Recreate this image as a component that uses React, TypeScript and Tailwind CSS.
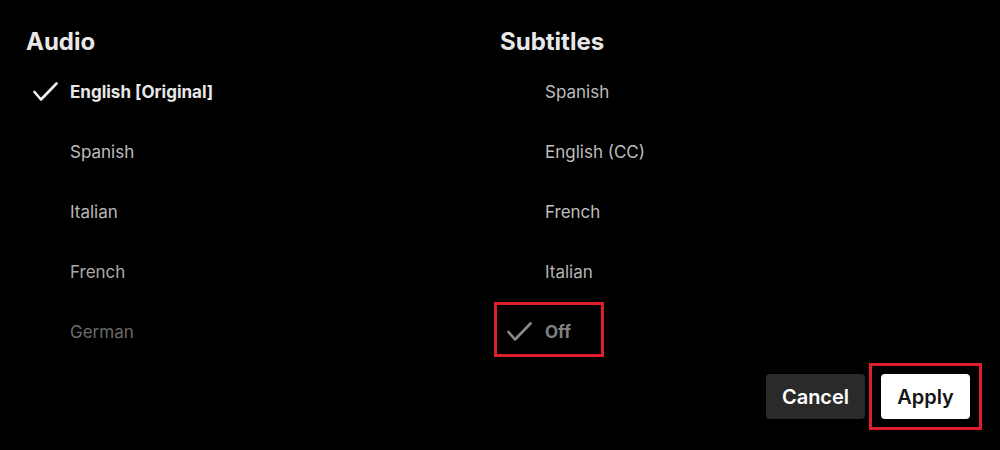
import React from "react";

const Check = ({ color }: { color: string }) => (
  <svg width="25" height="20" viewBox="0 0 25 20" fill="none" className="shrink-0">
    <polyline points="1.5,10 8,17.5 23.5,1.5" stroke={color} strokeWidth="2.6" strokeLinecap="round" strokeLinejoin="round" />
  </svg>
);

type Item = { label: string; color: string; bold?: boolean; checked?: boolean; checkColor?: string; boxed?: boolean };

const audio: Item[] = [
  { label: "English [Original]", color: "text-[#e8e8e8]", bold: true, checked: true, checkColor: "#f0f0f0" },
  { label: "Spanish", color: "text-[#bdbdbd]" },
  { label: "Italian", color: "text-[#b8b8b8]" },
  { label: "French", color: "text-[#a9a9a9]" },
  { label: "German", color: "text-[#6b6b6b]" },
];

const subs: Item[] = [
  { label: "Spanish", color: "text-[#bdbdbd]" },
  { label: "English (CC)", color: "text-[#bdbdbd]" },
  { label: "French", color: "text-[#bdbdbd]" },
  { label: "Italian", color: "text-[#b5b5b5]" },
  { label: "Off", color: "text-[#808080]", bold: true, checked: true, checkColor: "#8a8a8a", boxed: true },
];

const Row = ({ item, indent }: { item: Item; indent: string }) => (
  <div className="relative flex h-[60px] items-center">
    <div className={`flex ${indent} items-center pl-[7px]`}>
      {item.checked ? <Check color={item.checkColor || "#fff"} /> : null}
    </div>
    <span className={`text-[17px] leading-[24px] ${item.bold ? "font-bold" : "font-normal"} ${item.color}`}>{item.label}</span>
    {item.boxed ? (
      <span className="absolute left-[-6px] top-0 h-[55px] w-[110px] border-[3px] border-[#dc1f2a]" />
    ) : null}
  </div>
);

const Column = ({ title, items, width, indent }: { title: string; items: Item[]; width: string; indent: string }) => (
  <div className={`flex flex-col ${width}`}>
    <h2 className="mb-[4px] h-[32px] text-[24px] font-bold leading-[32px] text-[#e8e8e8]">{title}</h2>
    {items.map((it) => (
      <Row key={it.label} item={it} indent={indent} />
    ))}
  </div>
);

export default function App() {
  return (
    <div className="flex h-[450px] w-[1000px] flex-col bg-black" style={{ fontFamily: "Inter, 'Noto Sans', sans-serif" }}>
      <div className="flex pl-[26px] pt-[26px]">
        <Column title="Audio" items={audio} width="w-[474px]" indent="w-[44px]" />
        <Column title="Subtitles" items={subs} width="w-[300px]" indent="w-[45px]" />
      </div>
      <div className="mt-[1px] flex items-center justify-end gap-[4px] pr-[18px]">
        <button className="flex h-[45px] w-[99px] items-center justify-center rounded-[4px] bg-[#2a2a2a] text-[20px] font-semibold text-white">
          Cancel
        </button>
        <div className="border-[3px] border-[#dc1f2a] px-[9px] py-[8px]">
          <button className="flex h-[45px] w-[89px] items-center justify-center rounded-[4px] bg-white text-[20px] font-semibold text-[#141414]">
            Apply
          </button>
        </div>
      </div>
    </div>
  );
}
